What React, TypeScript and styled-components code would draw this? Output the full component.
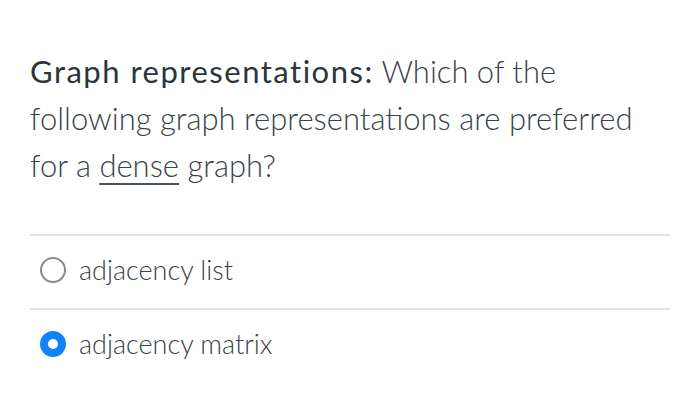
import { FC } from "react";
import styled, { createGlobalStyle } from "styled-components";

const GlobalStyle = createGlobalStyle`
  html, body {
    margin: 0;
    padding: 0;
    background: #ffffff;
  }
  body {
    font-family: "Lato Light", Lato, sans-serif;
    color: #2d3b45;
  }
`;

const Page = styled.div`
  padding: 48px 30px 0 30px;
`;

const Question = styled.p`
  margin: 0 0 45px 0;
  max-width: 636px;
  font-family: "Lato Light", Lato, sans-serif;
  font-size: 31px;
  line-height: 47px;
  font-weight: 400;
  color: #39434b;

  & strong {
    font-family: Lato, sans-serif;
    font-weight: 400;
    letter-spacing: 1.5px;
    color: #2a353d;
  }

  & u {
    text-decoration-thickness: 2px;
    text-underline-offset: 6px;
    text-decoration-color: #4a545c;
  }
`;

const Answers = styled.div`
  display: flex;
  flex-direction: column;
`;

const Option = styled.label`
  display: flex;
  align-items: center;
  gap: 13px;
  height: 74px;
  padding-left: 10px;
  padding-bottom: 5px;
  box-sizing: border-box;
  border-top: 2px solid #e3e3e3;
  font-family: "Lato Light", Lato, sans-serif;
  font-size: 27px;
  font-weight: 400;
  color: #39434b;
  cursor: pointer;
`;

const Radio = styled.span<{ $checked?: boolean }>`
  box-sizing: border-box;
  width: 26px;
  height: 26px;
  border-radius: 50%;
  flex: none;
  border: ${(p) => (p.$checked ? "8.5px solid #1283f6" : "2.5px solid #8a8a8a")};
  background: #ffffff;
`;

const answers = [
  { text: "adjacency list", checked: false },
  { text: "adjacency matrix", checked: true },
];

const App: FC = () => (
  <>
    <GlobalStyle />
    <Page>
      <Question>
        <strong>Graph representations:</strong> Which of the following graph
        representations are preferred for a <u>dense</u> graph?
      </Question>
      <Answers>
        {answers.map((a) => (
          <Option key={a.text}>
            <Radio $checked={a.checked} />
            {a.text}
          </Option>
        ))}
      </Answers>
    </Page>
  </>
);

export default App;
